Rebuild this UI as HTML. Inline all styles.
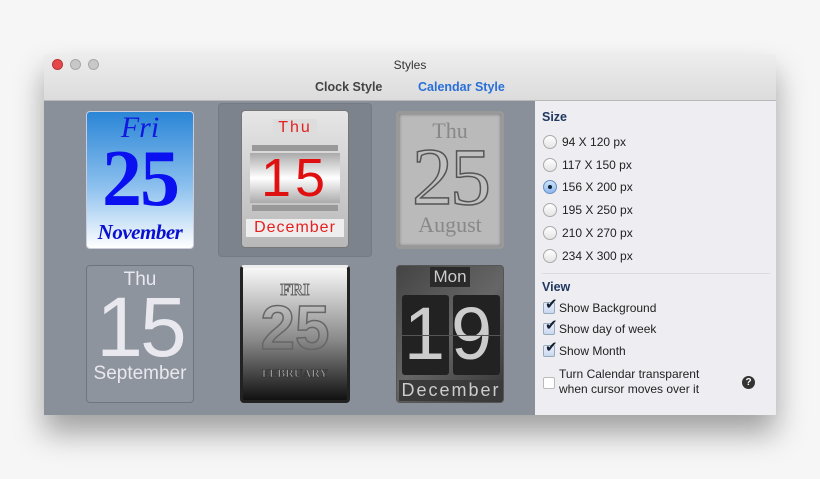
<!DOCTYPE html>
<html><head><meta charset="utf-8"><style>
*{margin:0;padding:0;box-sizing:border-box}
body{width:820px;height:479px;background:#f6f6f6;position:relative;overflow:hidden;font-family:"Liberation Sans",sans-serif}
.win{position:absolute;left:44px;top:54px;width:732px;height:361px;background:#ececec;box-shadow:0 18px 30px rgba(0,0,0,.35);border-radius:4px 4px 0 0;overflow:hidden}
.tb{position:absolute;left:0;top:0;width:732px;height:47px;background:linear-gradient(#ededed,#dcdcdc);border-bottom:1px solid #b8b8b8}
.dot{position:absolute;top:5px;width:11px;height:11px;border-radius:50%;background:#c8c8c8;border:1px solid #a8a8a8}
.title{position:absolute;top:4px;left:0;width:732px;text-align:center;font-size:12px;color:#333}
.tab{position:absolute;top:26px;font-size:12.5px;font-weight:bold}
.left{position:absolute;left:0;top:47px;width:491px;height:314px;background:#8a9099}
.right{position:absolute;left:491px;top:47px;width:241px;height:314px;background:#eeedf2}
.tile{position:absolute;width:108px;height:138px;border-radius:4px;overflow:hidden;text-align:center}
.sel{position:absolute;left:174px;top:2px;width:154px;height:154px;background:#7c838c;border-radius:4px;border:1px solid #737a83}
.r{position:absolute;font-size:12px;color:#222;left:27px}
.rb{position:absolute;left:8px;width:14px;height:14px;border-radius:50%;background:linear-gradient(#fff,#e4e4e4);border:1px solid #aaa}
.cb{position:absolute;left:8px;width:12px;height:12px;border-radius:2px;background:linear-gradient(#eef,#c8d8f0);border:1px solid #9ab}
.h{position:absolute;left:7px;font-size:12.5px;font-weight:bold;color:#203860}
</style></head><body>
<div class="win">
 <div class="tb">
  <div class="dot" style="left:8px;background:#e5484a;border-color:#b33"></div>
  <div class="dot" style="left:26px"></div>
  <div class="dot" style="left:44px"></div>
  <div class="title">Styles</div>
  <div class="tab" style="left:271px;color:#444">Clock Style</div>
  <div class="tab" style="left:374px;color:#2a6fd8">Calendar Style</div>
 </div>
 <div class="left">
  <div class="sel"></div>
  <div class="tile" style="left:42px;top:10px;background:linear-gradient(#2a86d6,#8cc0ee 55%,#fff);border:1px solid #ccd">
   <div style="font-family:'Liberation Serif';font-style:italic;font-size:30px;line-height:32px;color:#1018e0;margin-top:0px">Fri</div>
   <div style="font-family:'Liberation Serif';font-weight:bold;font-size:80px;line-height:70px;color:#0a10f0;letter-spacing:-2px">25</div>
   <div style="font-family:'Liberation Serif';font-weight:bold;font-style:italic;font-size:21px;color:#0a10d0;margin-top:6px;letter-spacing:-0.5px">November</div>
  </div>
  <div class="tile" style="left:197px;top:9px;background:linear-gradient(#e6e6e6,#b8b8b8);border:1px solid #777">
   <div style="margin:8px auto 0;width:44px;background:#ddd;color:#e52020;font-size:16px;letter-spacing:2px">Thu</div>
   <div style="margin:8px 10px 0;height:6px;background:#999"></div>
   <div style="margin:2px 8px 0;height:50px;background:linear-gradient(#aaa,#fff,#aaa);color:#e01010;font-size:54px;line-height:50px;letter-spacing:4px">15</div>
   <div style="margin:2px 10px 0;height:6px;background:#999"></div>
   <div style="margin:8px 4px 0;background:#eee;color:#e52020;font-size:16px;letter-spacing:1px">December</div>
  </div>
  <div class="tile" style="left:352px;top:10px;background:#bababa;border:3px solid #999;box-shadow:inset 0 0 3px #666">
   <div style="font-family:'Liberation Serif';font-size:22px;color:#888;margin-top:4px">Thu</div>
   <div style="font-family:'Liberation Serif';font-size:82px;line-height:66px;color:#c0c0c0;-webkit-text-stroke:1.5px #555;letter-spacing:-3px">25</div>
   <div style="font-family:'Liberation Serif';font-size:22px;color:#888;margin-top:2px">August</div>
  </div>
  <div class="tile" style="left:42px;top:164px;background:#8e949d;border:1px solid #6f757e">
   <div style="font-size:19px;color:#e8e8ee;margin-top:3px">Thu</div>
   <div style="font-size:84px;line-height:72px;color:#e8e8ee;font-weight:normal;letter-spacing:-3px">15</div>
   <div style="font-size:19px;color:#e8e8ee;margin-top:0px">September</div>
  </div>
  <div class="tile" style="left:196px;top:164px;width:110px;background:linear-gradient(#f8f8f8,#888 55%,#111);border:3px solid #222;border-top-color:#eee">
   <div style="font-family:'Liberation Serif';font-weight:bold;font-size:17px;color:#ddd;-webkit-text-stroke:1px #666;margin-top:12px">FRI</div>
   <div style="font-weight:bold;font-size:62px;line-height:58px;color:transparent;-webkit-text-stroke:1.5px #666">25</div>
   <div style="font-family:'Liberation Serif';font-weight:bold;font-size:12px;color:#999;-webkit-text-stroke:.6px #333;margin-top:8px">FEBRUARY</div>
  </div>
  <div class="tile" style="left:352px;top:164px;background:linear-gradient(135deg,#444,#666,#333);border:1px solid #555">
   <div style="margin:1px auto 0;width:40px;background:#2a2a2a;color:#ccc;font-size:17px">Mon</div>
   <div style="position:absolute;left:5px;top:29px;width:47px;height:80px;background:#222;border-radius:3px"></div>
   <div style="position:absolute;left:56px;top:29px;width:47px;height:80px;background:#222;border-radius:3px"></div>
   <div style="position:absolute;left:0;top:26px;width:108px;font-size:74px;line-height:84px;color:#ccc;letter-spacing:6px">19</div>
   <div style="position:absolute;left:0;top:69px;width:108px;height:1px;background:#555"></div>
   <div style="position:absolute;left:2px;top:114px;width:104px;font-size:18px;color:#ccc;letter-spacing:2px;background:#3a3a3a">December</div>
  </div>
 </div>
 <div class="right">
  <div class="h" style="top:9px">Size</div>
  <div class="rb" style="top:34px"></div><div class="r" style="top:34px">94 X 120 px</div>
  <div class="rb" style="top:57px"></div><div class="r" style="top:57px">117 X 150 px</div>
  <div class="rb" style="top:79px;background:linear-gradient(#cfe3fb,#8db8ee);border-color:#6b8fc0"><div style="width:4px;height:4px;border-radius:50%;background:#123;margin:4px"></div></div><div class="r" style="top:79px">156 X 200 px</div>
  <div class="rb" style="top:102px"></div><div class="r" style="top:102px">195 X 250 px</div>
  <div class="rb" style="top:125px"></div><div class="r" style="top:125px">210 X 270 px</div>
  <div class="rb" style="top:148px"></div><div class="r" style="top:148px">234 X 300 px</div>
  <div style="position:absolute;left:7px;top:172px;width:228px;height:1px;background:#dcdce0"></div>
  <div class="h" style="top:179px">View</div>
  <div class="cb" style="top:201px"></div><div style="position:absolute;left:10px;top:194px;font-size:15px;color:#123">✔</div><div class="r" style="left:24px;top:200px">Show Background</div>
  <div class="cb" style="top:222px"></div><div style="position:absolute;left:10px;top:215px;font-size:15px;color:#123">✔</div><div class="r" style="left:24px;top:221px">Show day of week</div>
  <div class="cb" style="top:244px"></div><div style="position:absolute;left:10px;top:237px;font-size:15px;color:#123">✔</div><div class="r" style="left:24px;top:243px">Show Month</div>
  <div class="cb" style="top:276px;background:#fff;border-color:#bbb"></div>
  <div class="r" style="left:24px;top:266px;line-height:15px">Turn Calendar transparent<br>when cursor moves over it</div>
  <div style="position:absolute;left:207px;top:275px;width:13px;height:13px;border-radius:50%;background:#333;color:#fff;font-size:10px;font-weight:bold;text-align:center;line-height:13px">?</div>
 </div>
</div>
</body></html>
